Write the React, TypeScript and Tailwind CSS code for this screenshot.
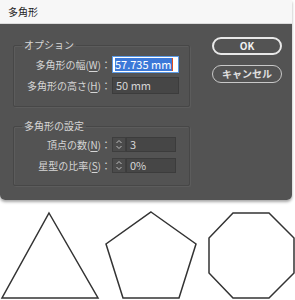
import React from "react";

const font = { fontFamily: '"Noto Sans CJK JP", "Noto Sans", sans-serif' };

function Key({ label, k }: { label: string; k: string }) {
  return (
    <span className="whitespace-nowrap">
      {label}(<span className="underline underline-offset-2">{k}</span>)：
    </span>
  );
}

function Spinner() {
  return (
    <div className="w-[14px] h-[15px] border border-[#3e3e3e] bg-[#4b4b4b] flex items-center justify-center">
      <svg width="8" height="11" viewBox="0 0 8 11" fill="none">
        <path d="M1.5 4L4 1.5L6.5 4" stroke="#bdbdbd" strokeWidth="1" />
        <path d="M1.5 7L4 9.5L6.5 7" stroke="#bdbdbd" strokeWidth="1" />
      </svg>
    </div>
  );
}

function Group({ title, children }: { title: string; children: React.ReactNode }) {
  return (
    <fieldset className="w-[177px] border border-[#474747] shadow-[inset_1px_1px_0_#5c5c5c,1px_1px_0_#5c5c5c] rounded-[2px] pb-[12px]">
      <legend className="ml-[8px] px-[2px] text-[10px] leading-[14px] text-[#d6d6d6]">{title}</legend>
      {children}
    </fieldset>
  );
}

export default function App() {
  return (
    <div className="w-[295px] h-[300px] bg-white overflow-hidden" style={font}>
      <div className="w-[292px] h-[200px] rounded-b-[5px] shadow-[0_2px_3px_rgba(0,0,0,0.35)] overflow-hidden">
        {/* Title */}
        <div className="h-[24px] bg-[#f7f7f7] border-b border-[#dcdcdc] flex items-center pl-[8px] text-[10px] text-[#222]">
          多角形
        </div>

        {/* Body */}
        <div className="h-[176px] bg-[#535353] flex pl-[13px] pt-[14px] text-[10px] text-[#d6d6d6]">
          <div className="flex flex-col gap-[12px]">
            <Group title="オプション">
              <div className="grid grid-cols-[98px_67px] gap-y-[4px] items-center mt-[4px]">
                <div className="text-right pr-[1px]"><Key label="多角形の幅" k="W" /></div>
                <div className="h-[17px] bg-white border border-[#5b9ae6] flex items-center px-[2px] text-[11px]">
                  <span className="bg-[#3b78d8] text-white leading-[13px] pr-[1px] border-r border-[#e24d1f]">57.735 mm</span>
                </div>
                <div className="text-right pr-[1px]"><Key label="多角形の高さ" k="H" /></div>
                <div className="h-[17px] bg-[#464646] border border-[#3c3c3c] flex items-center px-[3px] text-[11px]">50 mm</div>
              </div>
            </Group>
            <Group title="多角形の設定">
              <div className="grid grid-cols-[98px_14px_50px] gap-y-[6px] items-center mt-[4px]">
                <div className="text-right pr-[1px]"><Key label="頂点の数" k="N" /></div>
                <Spinner />
                <div className="h-[15px] bg-[#464646] border border-[#3c3c3c] flex items-center px-[3px] text-[11px]">3</div>
                <div className="text-right pr-[1px]"><Key label="星型の比率" k="S" /></div>
                <Spinner />
                <div className="h-[15px] bg-[#464646] border border-[#3c3c3c] flex items-center px-[3px] text-[11px]">0%</div>
              </div>
            </Group>
          </div>
          <div className="ml-[22px] mt-[-1px] flex flex-col gap-[10px]">
            <button className="w-[70px] h-[18px] rounded-full border-2 border-[#e8e8e8] text-[10px] font-bold text-[#f0f0f0] leading-none">
              OK
            </button>
            <button className="w-[70px] h-[18px] rounded-full border border-[#c8c8c8] text-[10px] font-bold text-[#e0e0e0] leading-none">
              キャンセル
            </button>
          </div>
        </div>
      </div>

      {/* Shapes */}
      <svg width="295" height="100" viewBox="0 200 295 100" className="block" fill="none" stroke="#333" strokeWidth="1.5" strokeLinejoin="miter">
        <polygon points="49,213 98,298 2,298" />
        <polygon points="151,212 196,244 179,298 123,298 106,244" />
        <polygon points="233,213 269,213 294,238 294,273 269,298 233,298 209,273 209,238" />
      </svg>
    </div>
  );
}
